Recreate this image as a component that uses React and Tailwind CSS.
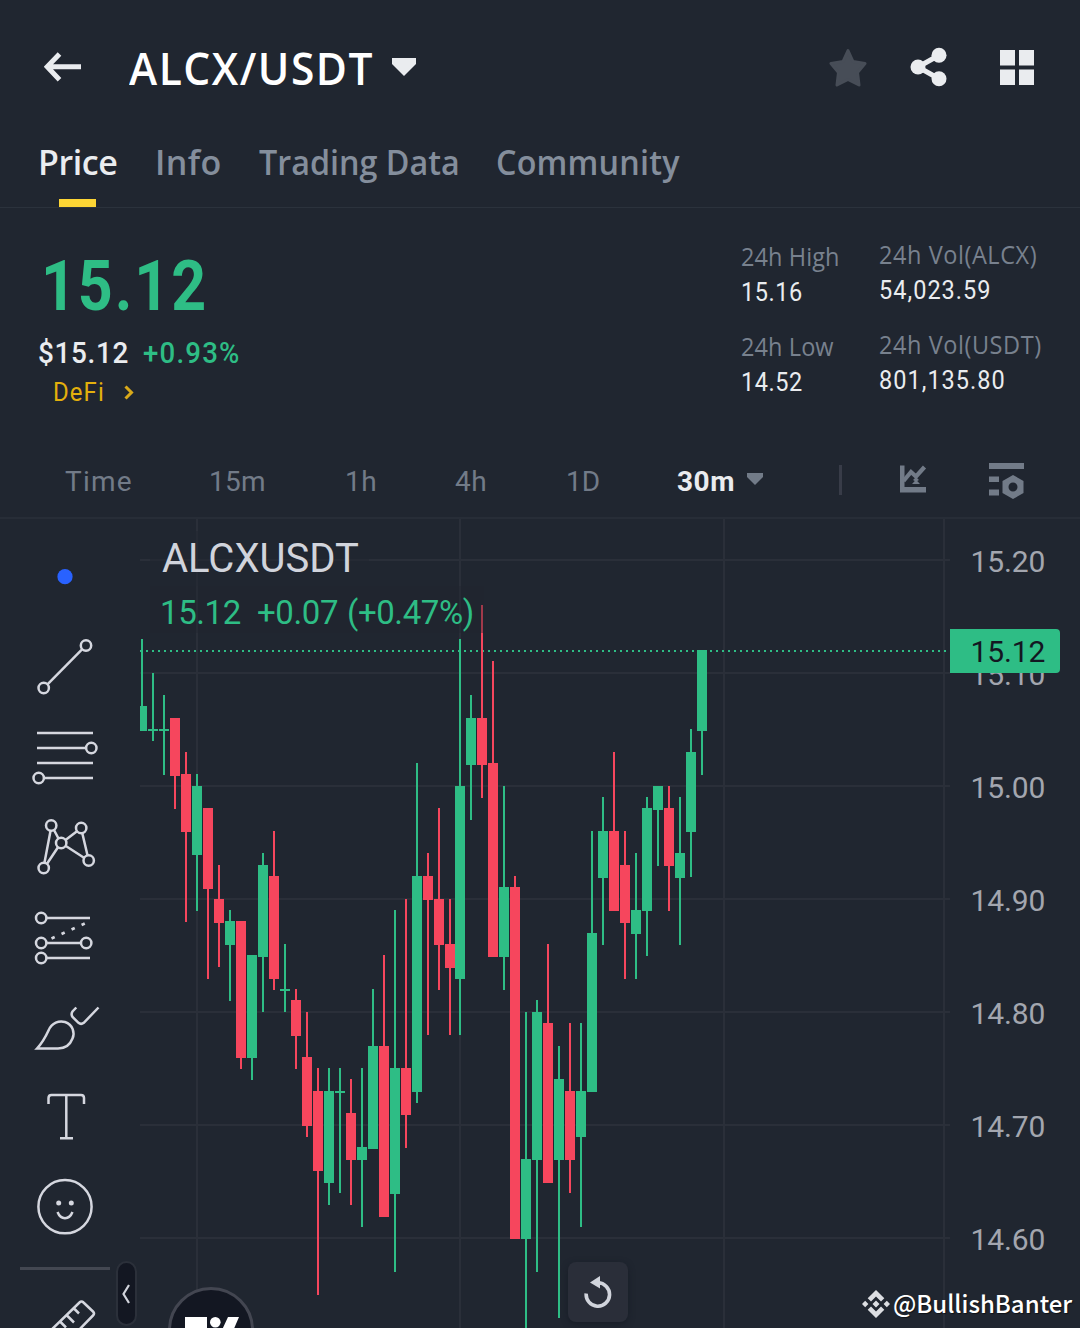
import React from "react";

const UP = "#2ebd85";
const DOWN = "#f6465d";

// [direction, high, body top, body bottom, low], prices in cents
const candles = [
  ["u", 1513, 1507, 1505, 1505],
  ["u", 1510, 1505, 1505, 1504],
  ["u", 1508, 1505, 1505, 1501],
  ["d", 1506, 1506, 1501, 1498],
  ["d", 1503, 1501, 1496, 1488],
  ["u", 1501, 1500, 1494, 1489],
  ["d", 1498, 1498, 1491, 1483],
  ["d", 1493, 1490, 1488, 1484],
  ["u", 1489, 1488, 1486, 1481],
  ["d", 1488, 1488, 1476, 1475],
  ["u", 1485, 1485, 1476, 1474],
  ["u", 1494, 1493, 1485, 1480],
  ["d", 1496, 1492, 1483, 1482],
  ["u", 1486, 1482, 1482, 1480],
  ["d", 1482, 1481, 1478, 1475],
  ["d", 1480, 1476, 1470, 1469],
  ["d", 1475, 1473, 1466, 1455],
  ["u", 1475, 1473, 1465, 1463],
  ["u", 1475, 1473, 1473, 1464],
  ["d", 1474, 1471, 1467, 1463],
  ["u", 1475, 1468, 1467, 1461],
  ["u", 1482, 1477, 1468, 1468],
  ["d", 1485, 1477, 1462, 1462],
  ["u", 1489, 1475, 1464, 1457],
  ["d", 1490, 1475, 1471, 1468],
  ["u", 1502, 1492, 1473, 1472],
  ["d", 1494, 1492, 1490, 1478],
  ["d", 1498, 1490, 1486, 1482],
  ["d", 1490, 1486, 1484, 1478],
  ["u", 1513, 1500, 1483, 1478],
  ["u", 1508, 1506, 1502, 1497],
  ["d", 1516, 1506, 1502, 1499],
  ["d", 1511, 1502, 1485, 1485],
  ["u", 1500, 1491, 1485, 1482],
  ["d", 1492, 1491, 1460, 1460],
  ["u", 1480, 1467, 1460, 1450],
  ["u", 1481, 1480, 1467, 1457],
  ["d", 1486, 1479, 1465, 1465],
  ["u", 1477, 1474, 1467, 1453],
  ["d", 1479, 1473, 1467, 1464],
  ["u", 1479, 1473, 1469, 1461],
  ["u", 1496, 1487, 1473, 1473],
  ["u", 1499, 1496, 1492, 1486],
  ["d", 1503, 1496, 1489, 1489],
  ["d", 1496, 1493, 1488, 1483],
  ["u", 1494, 1489, 1487, 1483],
  ["u", 1499, 1498, 1489, 1485],
  ["u", 1500, 1500, 1498, 1493],
  ["d", 1500, 1498, 1493, 1489],
  ["u", 1499, 1494, 1492, 1486],
  ["u", 1505, 1503, 1496, 1492],
  ["u", 1512, 1512, 1505, 1501],
];

const priceY = (c) => 268 + (1500 - c) * 11.3;
const candleX = (i) => (i < 29 ? 2 + i * 11 : 1 + i * 11);

function CandleChart() {
  return (
    <svg width="810" height="810" viewBox="0 0 810 810" className="block" shapeRendering="crispEdges">
      <g fill="#2a2f39">
        {[1520, 1510, 1500, 1490, 1480, 1470, 1460].map((c) => (
          <rect key={c} x="0" y={Math.round(priceY(c)) - 1} width="810" height="2" />
        ))}
        {[56, 319, 583, 803].map((x) => (
          <rect key={x} x={x} y="0" width="2" height="810" />
        ))}
      </g>
      <line x1="0" y1="133" x2="810" y2="133" stroke={UP} strokeWidth="2" strokeDasharray="2 4" />
      {candles.map(([dir, hi, top, bot, lo], i) => {
        const x = candleX(i);
        const t = Math.round(priceY(top) - 0.4);
        const b = Math.max(t + 2, Math.round(priceY(bot) + 1.1));
        const w0 = Math.round(priceY(hi) - 0.4);
        const w1 = Math.round(priceY(lo) + 0.4);
        return (
          <g key={i} fill={dir === "u" ? UP : DOWN}>
            <rect x={x - 1} y={w0} width="2" height={w1 - w0} />
            <rect x={x - 5} y={t} width="10" height={b - t} />
          </g>
        );
      })}
    </svg>
  );
}

function Caret({ className }) {
  return (
    <svg viewBox="0 0 24 18" className={className} fill="currentColor">
      <path d="M0 0H24V6L12 18L0 6Z" />
    </svg>
  );
}

function Header() {
  return (
    <header className="flex h-[136px] items-center pl-11 pr-[46px]">
      <svg width="38" height="32" viewBox="0 0 38 32" className="shrink-0 -translate-y-[1px] text-[#eaecef]" fill="none" stroke="currentColor" strokeWidth="5">
        <path d="M15.5 3L3.2 15.8L15.5 28.8M4 15.8H37" />
      </svg>
      <h1 className="ml-[47px] w-[247px] -translate-y-[1px] whitespace-nowrap font-['Open_Sans'] text-[45px] leading-none font-semibold tracking-[1.6px] text-white">
        <span className="inline-block origin-left scale-x-[0.945]">ALCX/USDT</span>
      </h1>
      <Caret className="ml-4 h-[18px] w-[24px] -translate-y-[1px] text-[#eaecef]" />
      <div className="ml-auto flex items-center">
        <svg width="38" height="40" viewBox="0 0 38 40" fill="#474d57" stroke="#474d57" strokeWidth="3" strokeLinejoin="round">
          <path d="M19 2.5L24 13.5L36 15.5L28.5 24.5L30 37L19 31.5L8 37L9.500 24.5L2 15.5L14 13.500Z" />
        </svg>
        <svg width="37" height="40" viewBox="0 0 37 40" className="ml-[43px] -translate-y-[1px]" fill="#eaecef">
          <path d="M29 8.200L8 20L29 31.800" fill="none" stroke="#eaecef" strokeWidth="5" />
          <circle cx="29" cy="8.200" r="7.500" />
          <circle cx="8" cy="20" r="7.500" />
          <circle cx="29" cy="31.800" r="7.500" />
        </svg>
        <svg width="34" height="35" viewBox="0 0 34 35" className="ml-[53px] -translate-y-[1px]" fill="#eaecef">
          <path d="M0 0h15v15.500h-15zM19 0h15v15.500h-15zM0 19.500h15v15.500h-15zM19 19.500h15v15.500h-15z" />
        </svg>
      </div>
    </header>
  );
}

function Tabs() {
  return (
    <nav className="flex h-[72px] border-b border-[#2b323c] pl-[39px] font-['Open_Sans'] text-[34px] leading-[52px] font-semibold whitespace-nowrap text-[#848e9c]">
      <div className="flex w-[116px] flex-col text-[#eaecef]">
        <span className="h-[63px] -translate-x-[1px] tracking-[-0.4px]">Price</span>
        <span className="ml-5 h-[8px] w-[37px] bg-[#fcd535]" />
      </div>
      <span className="w-[104px] tracking-[0.4px]">Info</span>
      <span className="w-[237px]"><span className="inline-block origin-left scale-x-[0.95]">Trading Data</span></span>
      <span className="tracking-[0.2px]"><span className="inline-block origin-left scale-x-[0.95]">Community</span></span>
    </nav>
  );
}

function Stat({ label, value, labelSpacing, valueSpacing }) {
  return (
    <div className="h-[90px] whitespace-nowrap">
      <div className="-translate-y-[2px] font-['Open_Sans'] text-[25px] leading-[34px] text-[#78818e]">
        <span className={"inline-block origin-left scale-x-[0.94] " + labelSpacing}>{label}</span>
      </div>
      <div className="font-['Roboto'] text-[25px] leading-[36px] text-[#eaecef]">
        <span className={"inline-block origin-left scale-x-[0.94] " + valueSpacing}>{value}</span>
      </div>
    </div>
  );
}

function PriceSummary() {
  return (
    <section className="flex h-[239px] font-['Roboto']">
      <div className="w-[741px] pl-[39px]">
        <div className="mt-[43px] h-[70px] pl-[2px] text-[70px] leading-[70px] font-bold tracking-[2.200px] text-[#2ebd85]">
          <span className="inline-block origin-left scale-x-[0.87]">15.12</span>
        </div>
        <div className="mt-[14px] flex h-[36px] text-[30px] leading-[36px] font-medium whitespace-nowrap">
          <span className="w-[104px] -translate-x-[1px] text-[#eaecef]"><span className="inline-block origin-left scale-x-[0.93] tracking-[0.7px]">$15.12</span></span>
          <span className="text-[#2ebd85]"><span className="inline-block origin-left scale-x-[0.92] tracking-[1.3px]">+0.93%</span></span>
        </div>
        <div className="mt-[5px] flex h-[32px] items-center pl-[14px] text-[26px] text-[#e3b00c]">
          <span className="w-[71px] tracking-[1.2px]"><span className="inline-block origin-left scale-x-[0.92]">DeFi</span></span>
          <svg width="10" height="15" viewBox="0 0 10 15" fill="none" stroke="#d9a91a" strokeWidth="3">
            <path d="M1.500 1.500L7.500 7.500L1.500 13.500" />
          </svg>
        </div>
      </div>
      <div className="w-[139px] pt-[33px]">
        <Stat label="24h High" value="15.16" labelSpacing="tracking-[0.1px]" valueSpacing="tracking-[0.6px]" />
        <Stat label="24h Low" value="14.52" labelSpacing="tracking-[0.1px]" valueSpacing="tracking-[0.6px]" />
      </div>
      <div className="-ml-px pt-[31px]">
        <Stat label="24h Vol(ALCX)" value="54,023.59" labelSpacing="tracking-[0.6px]" valueSpacing="tracking-[1.1px]" />
        <Stat label="24h Vol(USDT)" value="801,135.80" labelSpacing="tracking-[0.6px]" valueSpacing="tracking-[1.1px]" />
      </div>
    </section>
  );
}

function IntervalBar() {
  return (
    <div className="flex h-[72px] items-center border-b-2 border-[#272d37] pl-[65px] font-['Roboto'] text-[28px] leading-none whitespace-nowrap text-[#727b88]">
      <span className="w-[144px] tracking-[1.200px]">Time</span>
      <span className="w-[136px] tracking-[0.3px]">15m</span>
      <span className="w-[110px] tracking-[0.5px]">1h</span>
      <span className="w-[111px] tracking-[0.5px]">4h</span>
      <span className="w-[111px]">1D</span>
      <span className="w-[70px] font-bold tracking-[0.5px] text-[#eaecef]">30m</span>
      <Caret className="h-[12px] w-[16px] -translate-y-[3px] text-[#727b88]" />
      <span className="ml-[76px] h-[30px] w-[3px] -translate-y-[2px] bg-[#383c48]" />
      <svg width="28" height="30" viewBox="0 0 28 30" className="ml-[57px] -translate-y-[3px]" fill="#727b88">
        <path d="M1 1.500H5.500V23H27V28.500H1Z" />
        <path d="M4.500 17L12 8L17 12.500L25.500 3" fill="none" stroke="#727b88" strokeWidth="4.200" />
        <path d="M17 13L20 16L18.200 17L21 20H13L15.800 17L14 16Z" />
      </svg>
      <svg width="36" height="36" viewBox="0 0 36 36" className="ml-[62px] -translate-y-[1px]" fill="#727b88">
        <path d="M0 0H35V6H0ZM0 13.500H10V19H0ZM0 26.500H10V32.500H0Z" />
        <path fillRule="evenodd" d="M24 12L34.500 18V30L24 36L13.500 30V18ZM24 19.500A4.500 4.500 0 1 0 24 28.500A4.500 4.500 0 1 0 24 19.500Z" />
      </svg>
    </div>
  );
}

function DrawingToolbar() {
  return (
    <aside className="relative h-[809px] w-[140px] shrink-0">
      <svg width="140" height="809" viewBox="0 519 140 809" fill="none" stroke="#d5d7df" strokeWidth="2.500" className="block">
        <circle cx="65" cy="576.700" r="7.600" fill="#2962ff" stroke="none" />
        <g>
          <circle cx="86" cy="645.500" r="5.200" />
          <circle cx="43.700" cy="688" r="5.200" />
          <path d="M82.300 649.200L47.500 684.300" />
        </g>
        <g>
          <path d="M37 733H93M37 748H86M37 763H93M44 778H93" />
          <circle cx="91.300" cy="748" r="5.200" />
          <circle cx="38.700" cy="778" r="5.200" />
        </g>
        <g>
          <circle cx="51.200" cy="825.500" r="5.200" />
          <circle cx="81.200" cy="828" r="5.200" />
          <circle cx="61.200" cy="843" r="5.200" />
          <circle cx="43.700" cy="868" r="5.200" />
          <circle cx="88.700" cy="860.500" r="5.200" />
          <path d="M50.500 831L44.500 862.500M54 830L58.500 838.500M65.500 840L77 831.200M58 847.300L47 863.800M65.500 845.800L84 857.700M82.300 833.300L87.500 855.300" />
        </g>
        <g>
          <circle cx="41.200" cy="918" r="5.200" />
          <circle cx="41.200" cy="943" r="5.200" />
          <circle cx="86.200" cy="943" r="5.200" />
          <circle cx="41.200" cy="958" r="5.200" />
          <path d="M46.500 918H90M46.500 943H81M46.500 958H90" />
          <path d="M51.500 938.500L87 922.500" strokeWidth="2.800" strokeDasharray="3.500 7.500" />
        </g>
        <g>
          <path d="M37 1048.500Q43.500 1041.500 48.500 1030.500C52 1022.500 59 1020.500 65 1022C73 1024.500 75 1033 72.500 1038.500C70 1045 65.500 1048.500 58 1048.500Z" />
          <path d="M76.300 1007.500L72.500 1011.500Q70.500 1014.500 73 1017.500L78.500 1022.800Q81 1025 83.800 1022.800L98.500 1007.500" />
        </g>
        <path d="M48.500 1104V1098Q48.500 1095 51.500 1095H81Q84 1095 84 1098V1104M66.300 1095V1138M60 1138.300H73" />
        <g>
          <circle cx="65" cy="1206.700" r="26.600" />
          <circle cx="58.700" cy="1203" r="2.500" fill="#d5d7df" stroke="none" />
          <circle cx="71.300" cy="1203" r="2.500" fill="#d5d7df" stroke="none" />
          <path d="M57.500 1212Q60 1218.200 65 1218.200T72.500 1212" />
        </g>
        <path d="M20 1268.500H110" stroke="#434751" strokeWidth="3" />
        <path d="M46 1335L79.500 1302.500Q81.500 1300.500 83.500 1302.500L93 1311.500Q95 1313.500 93 1315.500L74 1335M73 1307.500L79 1313.500M66 1314.500L74 1322.500M59.500 1321L66 1327.500" />
      </svg>
      <button className="absolute top-[742px] left-[116px] flex h-[65px] w-[21px] items-center justify-center rounded-full border-2 border-[#2b303a] bg-[#131722]">
        <svg width="8" height="20" viewBox="0 0 8 20" fill="none" stroke="#d1d4dc" strokeWidth="2.200" className="-translate-x-[1px]">
          <path d="M7 1L1.500 10L7 19" />
        </svg>
      </button>
    </aside>
  );
}

function PriceAxis() {
  return (
    <div className="relative w-[130px] shrink-0 pt-[20px] font-['Roboto'] text-[30px] leading-[46px] tracking-[-0.1px] text-[#a3a6af]">
      {["15.20", "15.10", "15.00", "14.90", "14.80", "14.70", "14.60"].map((p) => (
        <div key={p} className="h-[113px] pl-[20.5px]">{p}</div>
      ))}
      <div className="absolute top-[110px] left-0 h-[44px] w-[110px] rounded-r-[4px] bg-[#2ebd85] pl-[20.5px] text-[#131722]">15.12</div>
    </div>
  );
}

function Watermark() {
  return (
    <div className="absolute top-[766px] left-[862px] flex items-center gap-[3px] text-white">
      <svg width="28" height="28" viewBox="0 0 28 28" fill="#dcdee2" className="translate-y-[1px]">
        <path d="M14 0L22.300 8.300L19 11.500L14 6.500L9 11.500L5.700 8.300Z" />
        <path d="M14 28L22.300 19.700L19 16.500L14 21.500L9 16.500L5.700 19.700Z" />
        <path d="M3.200 10.800L6.400 14L3.200 17.200L0 14ZM24.800 10.800L28 14L24.800 17.200L21.600 14ZM14 10.500L17.500 14L14 17.500L10.500 14Z" />
      </svg>
      <span className="font-['Noto_Sans_CJK_SC'] text-[24px] leading-[36px] font-medium whitespace-nowrap [text-shadow:1px_1px_1px_#0008]">@BullishBanter</span>
    </div>
  );
}

function ChartPanel() {
  return (
    <main className="relative flex h-[809px] overflow-hidden">
      <DrawingToolbar />
      <div className="relative -mt-px w-[810px] shrink-0 font-['Roboto'] whitespace-nowrap">
        <CandleChart />
        <div className="absolute top-[13px] left-[10px]">
          <div className="h-[55px] w-[219px] bg-[#202630]/50 pl-[12px] text-[40px] leading-[55px] text-[#d1d4dc]">ALCXUSDT</div>
          <div className="flex h-[47px] w-[334px] bg-[#202630]/40 pl-[10px] text-[33px] leading-[53px] tracking-[-0.4px] text-[#2ebd85]">
            <span className="w-[97px]">15.12</span>
            <span className="w-[90px]">+0.07</span>
            <span>(+0.47%)</span>
          </div>
        </div>
        <div className="absolute top-[769px] left-[28px] h-[86px] w-[86px] rounded-full border-[3px] border-[#434651] bg-[#131722]">
          <svg width="54" height="28" viewBox="0 0 54 28" className="mt-[27px] ml-[14px]" fill="#fff">
            <path d="M0 0H22V28H11V11H0ZM43 0H54L42 28H30Z" />
            <circle cx="30.300" cy="5.300" r="5.300" />
          </svg>
        </div>
        <button className="absolute top-[744px] left-[428px] flex h-[60px] w-[60px] items-center justify-center rounded-lg bg-[#2a2e39] shadow-[0_2px_6px_#13172299]">
          <svg width="28" height="32" viewBox="0 0 28 32" fill="none" stroke="#d1d4dc" strokeWidth="3.600">
            <path d="M2.200 17.500A11.700 11.700 0 1 0 14 6.800" />
            <path d="M16 0V12.500L6 6.500Z" fill="#d1d4dc" stroke="none" />
          </svg>
        </button>
      </div>
      <PriceAxis />
      <Watermark />
    </main>
  );
}

export default function App() {
  return (
    <div className="flex h-[1328px] w-[1080px] flex-col overflow-hidden bg-[#202630]">
      <Header />
      <Tabs />
      <PriceSummary />
      <IntervalBar />
      <ChartPanel />
    </div>
  );
}
